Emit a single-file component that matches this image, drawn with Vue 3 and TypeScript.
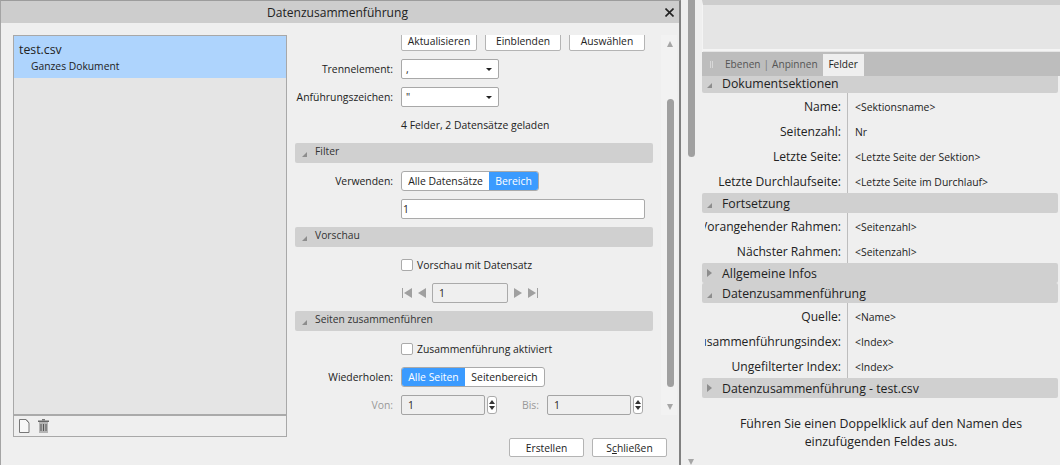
<script setup lang="ts">
interface Row { label: string; value: string }
const docRows: Row[] = [
  { label: 'Name:', value: '<Sektionsname>' },
  { label: 'Seitenzahl:', value: 'Nr' },
  { label: 'Letzte Seite:', value: '<Letzte Seite der Sektion>' },
  { label: 'Letzte Durchlaufseite:', value: '<Letzte Seite im Durchlauf>' },
]
const contRows: Row[] = [
  { label: 'Vorangehender Rahmen:', value: '<Seitenzahl>' },
  { label: 'Nächster Rahmen:', value: '<Seitenzahl>' },
]
const mergeRows: Row[] = [
  { label: 'Quelle:', value: '<Name>' },
  { label: 'Zusammenführungsindex:', value: '<Index>' },
  { label: 'Ungefilterter Index:', value: '<Index>' },
]
</script>

<template>
  <div class="app">
    <section class="dialog">
      <header class="title">
        <span>Datenzusammenführung</span>
        <svg class="close" width="9" height="9" viewBox="0 0 9 9"><path d="M.5.5l8 8M8.500.5l-8 8" stroke="#222" stroke-width="1.600" fill="none" /></svg>
      </header>
      <div class="body">
        <aside class="list">
          <div class="list-sel">
            <div class="list-name">test.csv</div>
            <div class="list-sub">Ganzes Dokument</div>
          </div>
          <div class="list-empty"></div>
          <div class="list-tools">
            <svg width="11" height="14" viewBox="0 0 11 14"><path d="M.5.5h6.500l3 3.500v9.500h-9.500z" fill="#f7f7f7" stroke="#777" /><path d="M7 .5l3 3.500" stroke="#777" fill="none" /></svg>
            <svg width="11" height="14" viewBox="0 0 11 14"><rect x="1" y="3" width="9" height="11" fill="#b5b5b5" /><rect y="1.500" width="11" height="1.500" fill="#666" /><rect x="4" width="3" height="1.500" fill="#777" /><path d="M3 5v7M5.500 5v7M8 5v7" stroke="#555" fill="none" /></svg>
          </div>
        </aside>
        <div class="side">
          <div class="scroller">
            <div class="form">
              <div class="row clipped">
                <div class="three">
                  <button class="btn">Aktualisieren</button>
                  <button class="btn">Einblenden</button>
                  <button class="btn">Auswählen</button>
                </div>
              </div>
              <div class="row">
                <label class="lab">Trennelement:</label>
                <div class="select"><span>,</span><i class="caret"></i></div>
              </div>
              <div class="row">
                <label class="lab">Anführungszeichen:</label>
                <div class="select"><span>"</span><i class="caret"></i></div>
              </div>
              <div class="row indent">4 Felder, 2 Datensätze geladen</div>

              <div class="head"><i class="tri-open"></i>Filter</div>
              <div class="row">
                <label class="lab">Verwenden:</label>
                <div class="seg">
                  <span class="seg-a">Alle Datensätze</span>
                  <span class="seg-b on">Bereich</span>
                </div>
              </div>
              <div class="row indent"><div class="input">1</div></div>

              <div class="head"><i class="tri-open"></i>Vorschau</div>
              <div class="row indent"><span class="check"></span>Vorschau mit Datensatz</div>
              <div class="row pager">
                <svg width="10" height="10" viewBox="0 0 10 10"><path d="M.5 0v10" stroke="#a0a0a0" fill="none" /><path d="M10 0v10L2 5z" fill="#a0a0a0" /></svg>
                <svg width="8" height="10" viewBox="0 0 8 10"><path d="M8 0v10L0 5z" fill="#a0a0a0" /></svg>
                <div class="pager-input">1</div>
                <svg width="8" height="10" viewBox="0 0 8 10"><path d="M0 0v10l8-5z" fill="#a0a0a0" /></svg>
                <svg width="10" height="10" viewBox="0 0 10 10"><path d="M0 0v10l8-5z" fill="#a0a0a0" /><path d="M9.500 0v10" stroke="#a0a0a0" fill="none" /></svg>
              </div>

              <div class="head"><i class="tri-open"></i>Seiten zusammenführen</div>
              <div class="row indent"><span class="check"></span>Zusammenführung aktiviert</div>
              <div class="row">
                <label class="lab">Wiederholen:</label>
                <div class="seg">
                  <span class="seg-c on">Alle Seiten</span>
                  <span class="seg-d">Seitenbereich</span>
                </div>
              </div>
              <div class="row">
                <label class="lab dim">Von:</label>
                <div class="num">1</div>
                <div class="spin"><i class="up"></i><i class="down"></i></div>
                <label class="lab dim bis">Bis:</label>
                <div class="num">1</div>
                <div class="spin"><i class="up"></i><i class="down"></i></div>
              </div>
            </div>
            <div class="vbar">
              <i class="arrow-up"></i>
              <div class="thumb"></div>
              <i class="arrow-down"></i>
            </div>
          </div>
          <footer class="foot">
            <button class="btn wide">Erstellen</button>
            <button class="btn wide">S<u>c</u>hließen</button>
          </footer>
        </div>
      </div>
    </section>

    <div class="gutter">
      <div class="gutter-thumb"></div>
      <i class="gutter-arrow"></i>
    </div>

    <section class="panel">
      <div class="panel-top"><div class="panel-blank"></div></div>
      <nav class="tabs">
        <span class="grip"></span>
        <span class="tab">Ebenen</span><span class="tab sep">|</span><span class="tab">Anpinnen</span>
        <span class="tab-on">Felder</span>
      </nav>
      <div class="pclip">
        <div class="phead first"><i class="tri-open"></i>Dokumentsektionen</div>
      </div>
      <div v-for="r in docRows" :key="r.label" class="prow">
        <div class="plab"><span>{{ r.label }}</span></div><div class="pval">{{ r.value }}</div>
      </div>
      <div class="phead"><i class="tri-open"></i>Fortsetzung</div>
      <div v-for="r in contRows" :key="r.label" class="prow">
        <div class="plab"><span>{{ r.label }}</span></div><div class="pval">{{ r.value }}</div>
      </div>
      <div class="phead"><i class="tri-closed"></i>Allgemeine Infos</div>
      <div class="phead"><i class="tri-open"></i>Datenzusammenführung</div>
      <div v-for="r in mergeRows" :key="r.label" class="prow">
        <div class="plab"><span>{{ r.label }}</span></div><div class="pval">{{ r.value }}</div>
      </div>
      <div class="phead"><i class="tri-closed"></i>Datenzusammenführung - test.csv</div>
      <p class="hint">Führen Sie einen Doppelklick auf den Namen des<br />einzufügenden Feldes aus.</p>
    </section>
  </div>
</template>

<style>
html, body { margin: 0; padding: 0; overflow: hidden; }
</style>

<style scoped>
.app {
  width: 1060px; height: 465px; display: flex; overflow: hidden;
  background: #efefef; color: #222;
  font-family: "Open Sans", "Liberation Sans", sans-serif; font-size: 10.400px;
}
.dialog {
  width: 681px; height: 465px; box-sizing: border-box; flex: none;
  border-top: 1px solid #9c9c9c; border-left: 1px solid #a4a4a4; border-right: 2px solid #808080;
  background: #efefef; display: flex; flex-direction: column;
}
.title {
  height: 22px; flex: none; background: #cdcdcd; display: flex; align-items: center; justify-content: center;
  position: relative; font-size: 12.050px; color: #222; padding-right: 5px; box-sizing: border-box;
}
.close { position: absolute; right: 5px; top: 7px; }
.body { display: flex; gap: 8px; padding: 12px 0 0 12px; }
.list {
  width: 274px; height: 402px; box-sizing: border-box; flex: none;
  border: 1px solid #a8a8a8; display: flex; flex-direction: column; background: #e5e5e5;
}
.list-sel { height: 42px; background: #aed4fd; padding: 5px 0 0 5px; box-sizing: border-box; color: #222; }
.list-name { font-size: 12.300px; line-height: 18px; }
.list-sub { padding-left: 12px; line-height: 15px; font-size: 10.300px; }
.list-empty { flex: 1; border-bottom: 2px solid #aaa; }
.list-tools { height: 20px; background: #efefef; display: flex; align-items: center; gap: 8px; padding: 0 0 0 5px; }
.side { width: 384px; flex: none; }
.scroller { height: 380px; display: flex; overflow: hidden; }
.form { width: 358px; flex: none; display: flex; flex-direction: column; gap: 8px; }
.row { height: 20px; flex: none; display: flex; align-items: center; white-space: nowrap; }
.clipped { margin-top: -4px; padding-left: 106px; }
.indent { padding-left: 106px; }
.lab { width: 98px; text-align: right; margin-right: 8px; flex: none; font-size: 10.400px; }
.dim { color: #999; }
.bis { width: 42px; }
.three { width: 244px; display: grid; grid-template-columns: repeat(3, 1fr); gap: 8px; }
.btn {
  height: 20px; padding: 0; box-sizing: border-box; border: 1px solid #b4b4b4; border-radius: 2px;
  background: #fff; color: #222; font: inherit; font-size: 10.300px; line-height: 17px;
}
.select {
  width: 98px; height: 20px; box-sizing: border-box; border: 1px solid #a8a8a8; border-radius: 2px;
  background: #fff; display: flex; align-items: center; justify-content: space-between; padding: 0 6px 0 4px;
}
.caret { width: 0; height: 0; border-left: 3px solid transparent; border-right: 3px solid transparent; border-top: 3px solid #222; }
.head {
  height: 20px; flex: none; background: #d0d0d0; border-radius: 2px; display: flex; align-items: center;
  box-sizing: border-box; padding-bottom: 5px; font-size: 10.300px; color: #333;
}
.head .tri-open { margin: 7px 8px 0 7px; }
.tri-open { width: 0; height: 0; flex: none; border-style: solid; border-width: 0 0 5px 5px; border-color: transparent transparent #8d8d8d transparent; }
.tri-closed { width: 0; height: 0; flex: none; border-style: solid; border-width: 4px 0 4px 5px; border-color: transparent transparent transparent #8d8d8d; }
.seg {
  height: 20px; box-sizing: border-box; border: 1px solid #aaa; border-radius: 3px; background: #fff;
  display: flex; align-items: stretch; overflow: hidden; font-size: 10.400px;
}
.seg span { display: flex; align-items: center; justify-content: center; box-sizing: border-box; }
.seg-a { width: 87px; }
.seg-b { width: 49px; }
.seg-c { width: 63px; }
.seg-d { width: 79px; }
.on { background: #3b9bff; color: #fff; }
.input {
  width: 244px; height: 20px; box-sizing: border-box; border: 1px solid #aaa; border-radius: 2px; background: #fff;
  padding-left: 1px; line-height: 18px;
}
.check {
  width: 12px; height: 12px; box-sizing: border-box; border: 1px solid #aaa; border-radius: 2px; background: #fff; margin-right: 4px; flex: none;
}
.pager { gap: 6px; padding-left: 107px; }
.pager-input {
  width: 76px; height: 20px; box-sizing: border-box; border: 1px solid #aaa; border-radius: 2px; padding-left: 6px; line-height: 18px;
}
.num {
  width: 84px; height: 20px; box-sizing: border-box; border: 1px solid #a4a4a4; border-radius: 2px; padding-left: 6px; line-height: 18px;
}
.spin {
  width: 10px; height: 18px; box-sizing: border-box; margin-left: 2px; border: 1px solid #aaa; border-radius: 3px; background: #fff;
  display: flex; flex-direction: column; align-items: center; justify-content: center; gap: 2px;
}
.up { border-left: 3px solid transparent; border-right: 3px solid transparent; border-bottom: 4px solid #333; }
.down { border-left: 3px solid transparent; border-right: 3px solid transparent; border-top: 4px solid #333; }
.vbar { width: 16px; margin-left: 8px; height: 380px; background: #f2f2f2; position: relative; }
.thumb { position: absolute; left: 6px; top: 64px; width: 7px; height: 288px; border-radius: 4px; background: #a0a0a0; }
.arrow-up { position: absolute; left: 6px; top: 6px; border-left: 3.500px solid transparent; border-right: 3.500px solid transparent; border-bottom: 6px solid #a6a6a6; }
.arrow-down { position: absolute; left: 6px; bottom: 5px; border-left: 3.500px solid transparent; border-right: 3.500px solid transparent; border-top: 6px solid #a6a6a6; }
.foot { display: flex; justify-content: flex-end; gap: 8px; margin-top: 23px; padding-right: 12px; }
.wide { width: 75px; height: 19px; line-height: 16px; }

.gutter { width: 21px; flex: none; position: relative; background: #efefef; }
.gutter-thumb { position: absolute; left: 7px; top: 0; width: 7px; height: 157px; background: #a0a0a0; border-radius: 0 0 4px 4px; }
.gutter-arrow { position: absolute; left: 7px; top: 459px; border-left: 3.500px solid transparent; border-right: 3.500px solid transparent; border-top: 6px solid #a6a6a6; }

.panel { width: 358px; flex: none; height: 465px; overflow: hidden; background: #efefef; display: flex; flex-direction: column; }
.panel-top { height: 52px; flex: none; background: #e5e5e5; box-sizing: border-box; border-top: 5px solid #cdcdcd; border-left: 1px solid #f4f4f4; }
.panel-blank { height: 44px; border-bottom: 2px solid #f4f4f4; }
.tabs { height: 24px; flex: none; background: #bdbdbd; display: flex; align-items: flex-end; position: relative; font-size: 10.100px; color: #555; }
.grip { width: 3px; height: 7px; border-left: 1px solid #d8d8d8; border-right: 1px solid #d8d8d8; margin: 0 12px 8px 8px; box-sizing: border-box; }
.tab { height: 22px; line-height: 20px; }
.sep { margin: 0 3px; color: #777; }
.tab-on { height: 22px; width: 41px; margin-left: 5px; background: #efefef; color: #222; text-align: center; line-height: 20px; }
.pclip { height: 17px; flex: none; overflow: hidden; }
.phead {
  height: 20px; flex: none; margin-right: 2px; background: #d0d0d0; border-radius: 2px; display: flex; align-items: center;
  font-size: 12.300px; color: #222;
}
.phead.first { margin-top: -3px; }
.phead .tri-open { margin: 4px 10px 0 5px; }
.phead .tri-closed { margin: 0 10px 0 5px; }
.prow { height: 25px; flex: none; display: flex; }
.plab {
  width: 136px; margin-left: 3px; flex: none; display: flex; justify-content: flex-end; align-items: center;
  overflow: hidden; white-space: nowrap; font-size: 12.100px; color: #222; padding-top: 2px; box-sizing: border-box;
}
.pval {
  margin-left: 6px; flex: 1; border-left: 1px solid #bdbdbd; padding: 2px 0 0 7px; display: flex; align-items: center; font-size: 10.400px; white-space: nowrap;
}
.hint { margin: 17px 0 0; text-align: center; font-size: 12.350px; line-height: 18px; color: #222; }
</style>
